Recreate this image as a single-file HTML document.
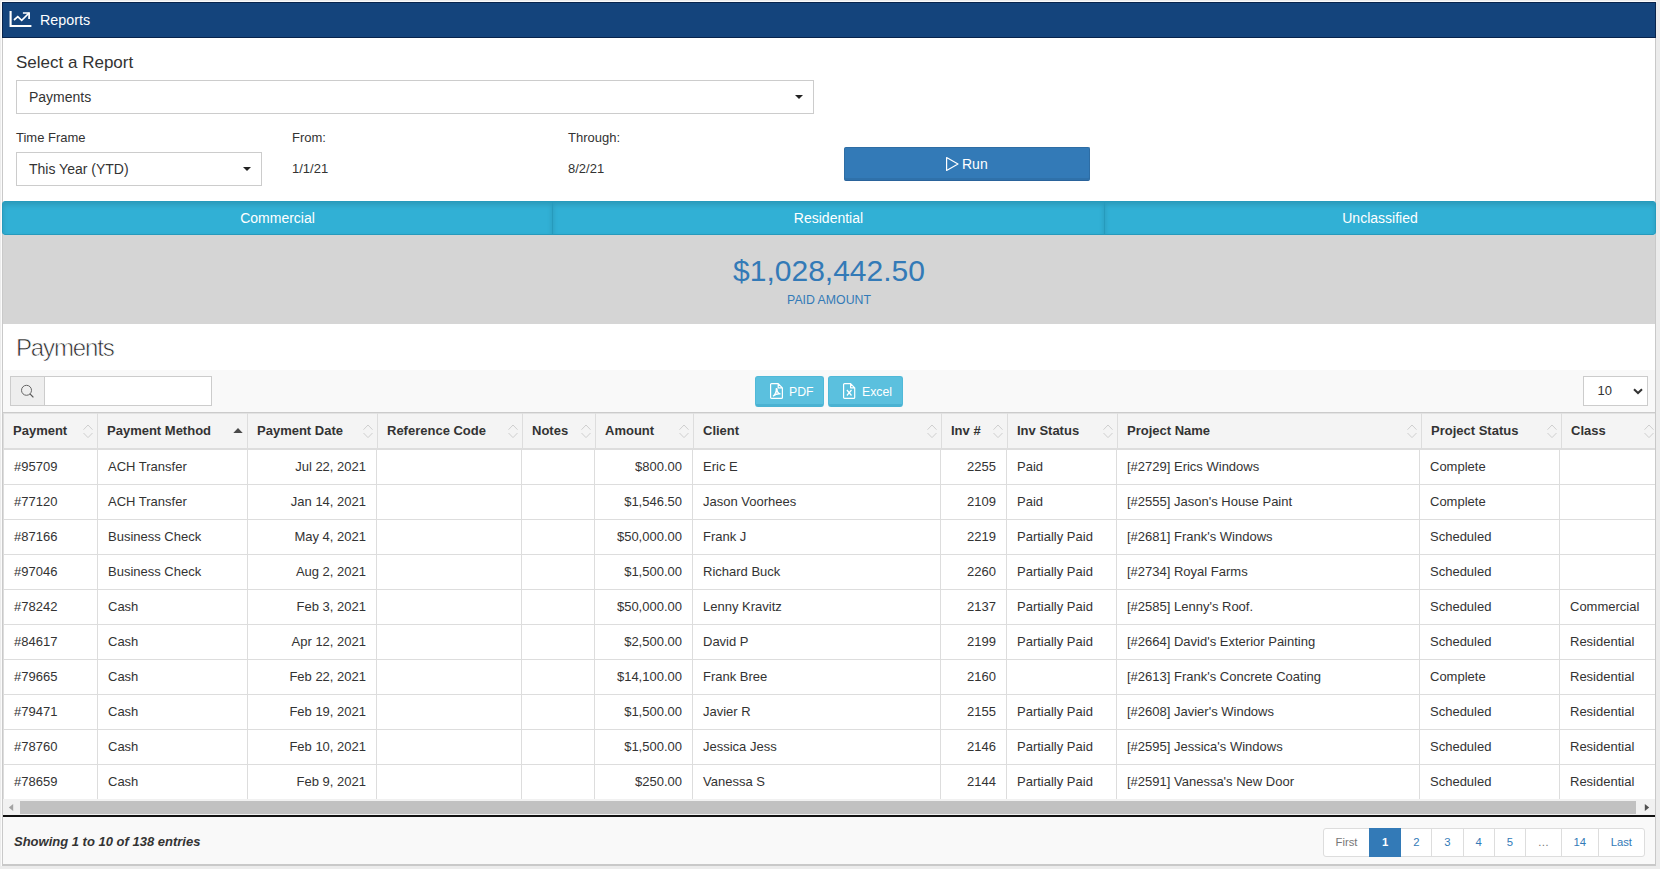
<!DOCTYPE html>
<html>
<head>
<meta charset="utf-8">
<title>Reports</title>
<style>
*{box-sizing:border-box;margin:0;padding:0}
html,body{width:1660px;height:869px;overflow:hidden;background:#ececec;font-family:"Liberation Sans",sans-serif;color:#333;font-size:14px}
#frame{position:absolute;left:2px;top:2px;width:1654px;height:864px;background:#fff;border-left:1px solid #c9c9c9;border-right:1px solid #c9c9c9;border-bottom:2px solid #c9c9c9}
#hdr{position:absolute;left:2px;top:2px;width:1654px;height:36px;background:#14447c;border:1px solid #08244c}
#hdr .t{position:absolute;left:37px;top:8px;color:#fff;font-size:14.3px;line-height:18px}
#hdr svg{position:absolute;left:0;top:0}
.lbl{position:absolute;font-size:13px;line-height:16px;color:#333;white-space:nowrap}
.sel{position:absolute;border:1px solid #ccc;background:#fff;font-size:14px;color:#333}
.sel span{position:absolute;left:12px;top:8px;line-height:16px}
.caret{position:absolute;width:0;height:0;border-left:4px solid transparent;border-right:4px solid transparent;border-top:4px solid #222}
#run{position:absolute;left:844px;top:147px;width:246px;height:34px;background:#337ab7;border:1px solid #2e6da4;border-bottom:1px solid #2a639b;box-shadow:inset 0 -2px 0 rgba(0,0,0,.07);border-radius:2px;color:#fff;font-size:14px;line-height:32px}
#run span{position:absolute;left:117px;top:0}
#run svg{position:absolute;left:100px;top:8px}
#tabs{position:absolute;left:2px;top:201px;width:1654px;height:34px}
.tab{position:absolute;top:0;height:34px;color:#fff;font-size:14px;line-height:32px;text-align:center;background:#31b0d5;border:1px solid #269abc;box-shadow:inset 0 3px 5px rgba(0,0,0,.125)}
#band{position:absolute;left:3px;top:235px;width:1652px;height:89px;background:#d5d5d5}
#amt{position:absolute;left:0;width:100%;top:19px;text-align:center;color:#337ab7;font-size:30px;line-height:34px}
#amtl{position:absolute;left:0;width:100%;top:58px;text-align:center;color:#337ab7;font-size:12.3px;line-height:14px}
#h2{position:absolute;left:16px;top:334px;font-size:24px;line-height:28px;color:#262626;letter-spacing:-1.15px;-webkit-text-stroke:0.65px #fff}
#tool{position:absolute;left:3px;top:370px;width:1652px;height:43px;background:#f9f9f9}
.btn{position:absolute;top:376px;height:31px;background:#5bc0de;border:1px solid #50b9d8;border-bottom:3px solid #4ab2d2;border-radius:3px;color:#fff;font-size:12.3px;line-height:30px}
.btn span{position:absolute;top:0}
.btn svg{position:absolute;left:12px;top:4px}
table{position:absolute;left:3px;border-collapse:separate;border-spacing:0;table-layout:fixed;width:1652px}
#th{top:412px}
#tb{top:450px}
th{height:38px;background:#f4f4f4;border-top:2px solid #e3e3e3;border-bottom:2px solid #ddd;border-left:1px solid #ddd;text-align:left;font-size:13px;font-weight:bold;color:#333;padding:0 0 2px 9px;position:relative;white-space:nowrap;vertical-align:middle}
th:first-child{padding-left:9px}
td:first-child{padding-left:10px}
.so{position:absolute;right:4.5px;top:7px}
th:last-child .so{right:1.5px}
td{height:35px;background:#fff;border-bottom:1px solid #ddd;border-left:1px solid #ddd;font-size:13px;color:#333;padding:0 0 2px 10px;white-space:nowrap;overflow:hidden;vertical-align:middle}
td.r{text-align:right;padding:0 10px 2px 0}
.sgrp{position:absolute;left:10px;top:376px;width:202px;height:30px;border:1px solid #ccc;background:#fff}
.sic{position:absolute;left:0;top:0;width:34px;height:28px;background:#eee;border-right:1px solid #ccc}
.sic svg{position:absolute;left:6px;top:4px}
#sb{position:absolute;left:3px;top:799px;width:1652px;height:16px;background:#f1f1f1}
#sb .thumb{position:absolute;left:17px;top:2px;width:1616px;height:13px;background:#c1c1c1}
#sb svg{position:absolute;top:0}
#foot{position:absolute;left:3px;top:815px;width:1652px;height:49px;background:#f9f9f9;border-top:2px solid #111}
#foot .info{position:absolute;left:11px;top:17px;font-size:13px;font-weight:bold;font-style:italic;color:#333;line-height:16px}
.pg{position:absolute;left:1320px;top:11px;height:29px}
.pg a{position:absolute;top:0;display:block;height:29px;line-height:26px;text-align:center;font-size:11.3px;color:#337ab7;border:1px solid #ddd;background:#fff}
.pg a:first-child{border-radius:3px 0 0 3px}
.pg a:last-child{border-radius:0 3px 3px 0}
.pg a.f{color:#777}
.pg a.on{background:#337ab7;color:#fff;font-weight:bold;border-color:#337ab7;z-index:2}
</style>
</head>
<body>
<div style="position:absolute;left:1px;top:1px;width:1656px;height:1px;background:#fbfbfb"></div><div style="position:absolute;left:1px;top:1px;width:1px;height:865px;background:#fbfbfb"></div>
<div id="frame"></div>
<div id="hdr"><svg width="40" height="34" viewBox="0 0 40 34"><path d="M7.6 7.9 V23 H28.4" fill="none" stroke="#fff" stroke-width="2.1"/><path d="M11 17 L14.8 13.7 L18.7 17.3 L26.1 10" fill="none" stroke="#fff" stroke-width="1.7" stroke-linejoin="miter"/><path d="M19.9 10 H26.1 V16" fill="none" stroke="#fff" stroke-width="1.7"/></svg><div class="t">Reports</div></div>

<div class="lbl" style="left:16px;top:53px;font-size:17px;line-height:20px">Select a Report</div>
<div class="sel" style="left:16px;top:80px;width:798px;height:34px"><span>Payments</span><i class="caret" style="right:10.3px;top:14px"></i></div>

<div class="lbl" style="left:16px;top:130px">Time Frame</div>
<div class="sel" style="left:16px;top:152px;width:246px;height:34px"><span>This Year (YTD)</span><i class="caret" style="right:10.3px;top:14px"></i></div>
<div class="lbl" style="left:292px;top:130px">From:</div>
<div class="lbl" style="left:292px;top:161px">1/1/21</div>
<div class="lbl" style="left:568px;top:130px">Through:</div>
<div class="lbl" style="left:568px;top:161px">8/2/21</div>
<div id="run"><svg width="16" height="16" viewBox="0 0 16 16"><path d="M1.6 1.6 L13 8 L1.6 14.4 Z" fill="none" stroke="#fff" stroke-width="1.2" stroke-linejoin="round"/></svg><span>Run</span></div>

<div id="tabs">
  <div class="tab" style="left:0;width:551px;border-radius:3px 0 0 3px">Commercial</div>
  <div class="tab" style="left:550px;width:553px">Residential</div>
  <div class="tab" style="left:1102px;width:552px;border-radius:0 3px 3px 0">Unclassified</div>
</div>
<div id="band"><div id="amt">$1,028,442.50</div><div id="amtl">PAID AMOUNT</div></div>
<div id="h2">Payments</div>
<div id="tool"></div>
<div style="position:absolute;left:3px;top:412px;width:1652px;height:1px;background:#cbcbcb;z-index:3"></div>
<div class="sgrp"><div class="sic"><svg width="20" height="20" viewBox="0 0 20 20"><circle cx="9.5" cy="9.3" r="5" fill="none" stroke="#666" stroke-width="1"/><path d="M13 12.8 L16.4 16.3" stroke="#555" stroke-width="1.2"/></svg></div></div>
<div class="btn" style="left:755px;width:69px"><svg width="18" height="20" viewBox="0 0 18 20"><path d="M3.6 2.6 H10.2 L14.4 6.8 V16.4 a1 1 0 0 1 -1 1 H3.6 a1 1 0 0 1 -1 -1 V3.6 a1 1 0 0 1 1 -1 Z M10.2 2.6 V6.8 H14.4" fill="none" stroke="#fff" stroke-width="1.2" stroke-linejoin="round"/><path d="M5 15.2 C7 13.8 8.6 10.4 8.2 8.2 C8 7.3 9.3 7.3 9.1 8.4 C8.8 10.4 10.6 12.6 12.6 13 C11 12.6 7.6 13.2 5 15.2" fill="#fff" fill-opacity=".5" stroke="#fff" stroke-width="1.2"/></svg><span style="left:33px">PDF</span></div>
<div class="btn" style="left:828px;width:75px"><svg width="18" height="20" viewBox="0 0 18 20"><path d="M3.6 2.6 H9.6 L13.7 6.8 V16.4 a1 1 0 0 1 -1 1 H3.6 a1 1 0 0 1 -1 -1 V3.6 a1 1 0 0 1 1 -1 Z M9.6 2.6 V6.8 H13.7" fill="none" stroke="#fff" stroke-width="1.2" stroke-linejoin="round"/><path d="M5.9 9 L10.5 14.5 M10.5 9 L5.9 14.5" fill="none" stroke="#fff" stroke-width="1.2"/></svg><span style="left:33px">Excel</span></div>
<div class="sel" style="left:1583px;top:376px;width:65px;height:30px;font-size:13px"><span style="left:13.5px;top:6px">10</span><svg style="position:absolute;left:46px;top:9px" width="16" height="12" viewBox="0 0 16 12"><path d="M4 3.2 L8 7 L12 3.2" fill="none" stroke="#333" stroke-width="2"/></svg></div>
<table id="th"><colgroup><col style="width:94px"><col style="width:150px"><col style="width:130px"><col style="width:145px"><col style="width:73px"><col style="width:98px"><col style="width:248px"><col style="width:66px"><col style="width:110px"><col style="width:304px"><col style="width:140px"><col style="width:94px"></colgroup><tr><th>Payment<svg class="so" width="10" height="20" viewBox="0 0 10 20"><path d="M0.5 8.7 L5 4 L9.5 8.7 M0.5 12 L5 16.6 L9.5 12" fill="none" stroke="#cfcfcf" stroke-width="1"/></svg></th><th>Payment Method<svg class="so" width="10" height="20" viewBox="0 0 10 20"><path d="M0.3 12 L5 6.9 L9.7 12 Z" fill="#4a4a4a"/></svg></th><th>Payment Date<svg class="so" width="10" height="20" viewBox="0 0 10 20"><path d="M0.5 8.7 L5 4 L9.5 8.7 M0.5 12 L5 16.6 L9.5 12" fill="none" stroke="#cfcfcf" stroke-width="1"/></svg></th><th>Reference Code<svg class="so" width="10" height="20" viewBox="0 0 10 20"><path d="M0.5 8.7 L5 4 L9.5 8.7 M0.5 12 L5 16.6 L9.5 12" fill="none" stroke="#cfcfcf" stroke-width="1"/></svg></th><th>Notes<svg class="so" width="10" height="20" viewBox="0 0 10 20"><path d="M0.5 8.7 L5 4 L9.5 8.7 M0.5 12 L5 16.6 L9.5 12" fill="none" stroke="#cfcfcf" stroke-width="1"/></svg></th><th>Amount<svg class="so" width="10" height="20" viewBox="0 0 10 20"><path d="M0.5 8.7 L5 4 L9.5 8.7 M0.5 12 L5 16.6 L9.5 12" fill="none" stroke="#cfcfcf" stroke-width="1"/></svg></th><th>Client<svg class="so" width="10" height="20" viewBox="0 0 10 20"><path d="M0.5 8.7 L5 4 L9.5 8.7 M0.5 12 L5 16.6 L9.5 12" fill="none" stroke="#cfcfcf" stroke-width="1"/></svg></th><th>Inv #<svg class="so" width="10" height="20" viewBox="0 0 10 20"><path d="M0.5 8.7 L5 4 L9.5 8.7 M0.5 12 L5 16.6 L9.5 12" fill="none" stroke="#cfcfcf" stroke-width="1"/></svg></th><th>Inv Status<svg class="so" width="10" height="20" viewBox="0 0 10 20"><path d="M0.5 8.7 L5 4 L9.5 8.7 M0.5 12 L5 16.6 L9.5 12" fill="none" stroke="#cfcfcf" stroke-width="1"/></svg></th><th>Project Name<svg class="so" width="10" height="20" viewBox="0 0 10 20"><path d="M0.5 8.7 L5 4 L9.5 8.7 M0.5 12 L5 16.6 L9.5 12" fill="none" stroke="#cfcfcf" stroke-width="1"/></svg></th><th>Project Status<svg class="so" width="10" height="20" viewBox="0 0 10 20"><path d="M0.5 8.7 L5 4 L9.5 8.7 M0.5 12 L5 16.6 L9.5 12" fill="none" stroke="#cfcfcf" stroke-width="1"/></svg></th><th>Class<svg class="so" width="10" height="20" viewBox="0 0 10 20"><path d="M0.5 8.7 L5 4 L9.5 8.7 M0.5 12 L5 16.6 L9.5 12" fill="none" stroke="#cfcfcf" stroke-width="1"/></svg></th></tr></table>
<table id="tb"><colgroup><col style="width:94px"><col style="width:150px"><col style="width:129px"><col style="width:145px"><col style="width:73px"><col style="width:98px"><col style="width:248px"><col style="width:66px"><col style="width:110px"><col style="width:303px"><col style="width:140px"><col style="width:96px"></colgroup>
<tr><td>#95709</td><td>ACH Transfer</td><td class="r">Jul 22, 2021</td><td></td><td></td><td class="r">$800.00</td><td>Eric E</td><td class="r">2255</td><td>Paid</td><td>[#2729] Erics Windows</td><td>Complete</td><td></td></tr>
<tr><td>#77120</td><td>ACH Transfer</td><td class="r">Jan 14, 2021</td><td></td><td></td><td class="r">$1,546.50</td><td>Jason Voorhees</td><td class="r">2109</td><td>Paid</td><td>[#2555] Jason's House Paint</td><td>Complete</td><td></td></tr>
<tr><td>#87166</td><td>Business Check</td><td class="r">May 4, 2021</td><td></td><td></td><td class="r">$50,000.00</td><td>Frank J</td><td class="r">2219</td><td>Partially Paid</td><td>[#2681] Frank's Windows</td><td>Scheduled</td><td></td></tr>
<tr><td>#97046</td><td>Business Check</td><td class="r">Aug 2, 2021</td><td></td><td></td><td class="r">$1,500.00</td><td>Richard Buck</td><td class="r">2260</td><td>Partially Paid</td><td>[#2734] Royal Farms</td><td>Scheduled</td><td></td></tr>
<tr><td>#78242</td><td>Cash</td><td class="r">Feb 3, 2021</td><td></td><td></td><td class="r">$50,000.00</td><td>Lenny Kravitz</td><td class="r">2137</td><td>Partially Paid</td><td>[#2585] Lenny's Roof.</td><td>Scheduled</td><td>Commercial</td></tr>
<tr><td>#84617</td><td>Cash</td><td class="r">Apr 12, 2021</td><td></td><td></td><td class="r">$2,500.00</td><td>David P</td><td class="r">2199</td><td>Partially Paid</td><td>[#2664] David's Exterior Painting</td><td>Scheduled</td><td>Residential</td></tr>
<tr><td>#79665</td><td>Cash</td><td class="r">Feb 22, 2021</td><td></td><td></td><td class="r">$14,100.00</td><td>Frank Bree</td><td class="r">2160</td><td></td><td>[#2613] Frank's Concrete Coating</td><td>Complete</td><td>Residential</td></tr>
<tr><td>#79471</td><td>Cash</td><td class="r">Feb 19, 2021</td><td></td><td></td><td class="r">$1,500.00</td><td>Javier R</td><td class="r">2155</td><td>Partially Paid</td><td>[#2608] Javier's Windows</td><td>Scheduled</td><td>Residential</td></tr>
<tr><td>#78760</td><td>Cash</td><td class="r">Feb 10, 2021</td><td></td><td></td><td class="r">$1,500.00</td><td>Jessica Jess</td><td class="r">2146</td><td>Partially Paid</td><td>[#2595] Jessica's Windows</td><td>Scheduled</td><td>Residential</td></tr>
<tr><td>#78659</td><td>Cash</td><td class="r">Feb 9, 2021</td><td></td><td></td><td class="r">$250.00</td><td>Vanessa S</td><td class="r">2144</td><td>Partially Paid</td><td>[#2591] Vanessa's New Door</td><td>Scheduled</td><td>Residential</td></tr>
</table>

<div id="sb"><svg style="left:0" width="17" height="16" viewBox="0 0 17 16"><path d="M5.8 8.4 L10.2 4.9 V11.9 Z" fill="#a3a3a3"/></svg><div class="thumb"></div><svg style="right:0" width="17" height="16" viewBox="0 0 17 16"><path d="M11.2 8.4 L6.8 4.9 V11.9 Z" fill="#505050"/></svg></div>
<div id="foot"><div class="info">Showing 1 to 10 of 138 entries</div>
<div class="pg"><a class="f" style="left:0.0px;width:47.0px">First</a><a class="on" style="left:46.0px;width:32.2px">1</a><a class="" style="left:77.2px;width:32.2px">2</a><a class="" style="left:108.4px;width:32.2px">3</a><a class="" style="left:139.6px;width:32.2px">4</a><a class="" style="left:170.8px;width:32.2px">5</a><a class="f" style="left:202.0px;width:36.8px">…</a><a class="" style="left:237.8px;width:38.1px">14</a><a class="" style="left:274.9px;width:46.9px">Last</a></div>
</div>
</body>
</html>
